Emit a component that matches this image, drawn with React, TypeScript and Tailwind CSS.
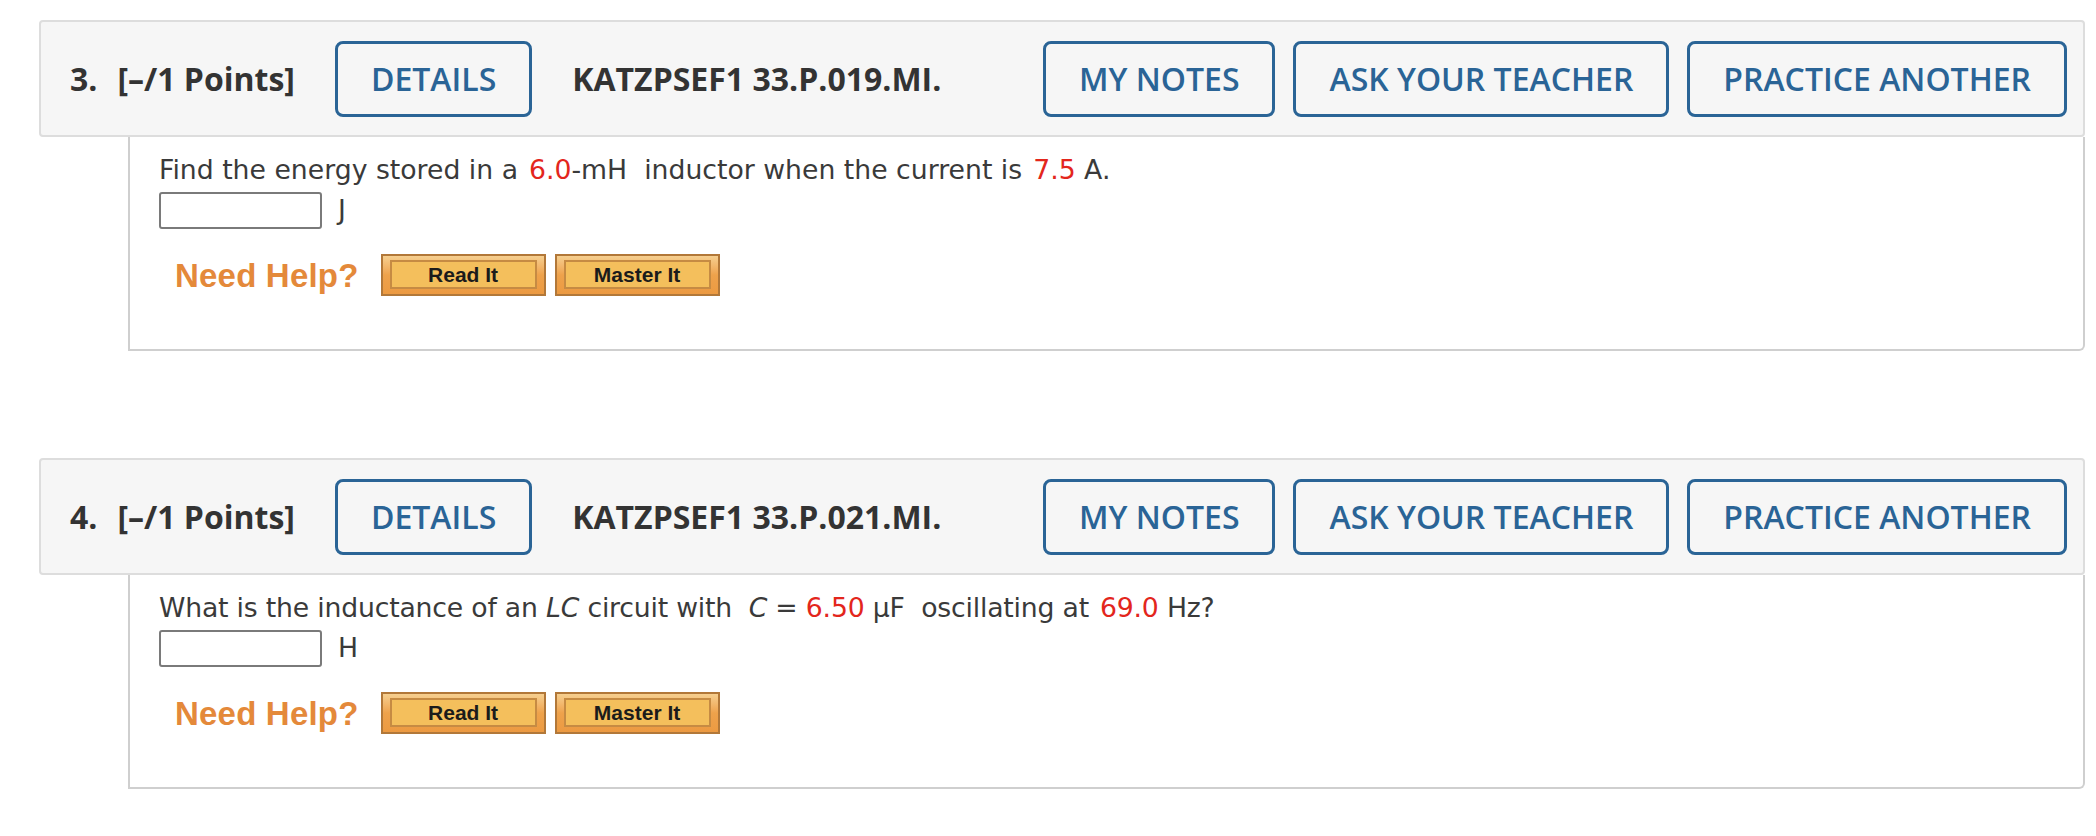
import type { ReactNode } from 'react'

const red = 'text-[#e3261c]'

function Val({ children }: { children: ReactNode }) {
  return <span className={`ml-[11px] ${red}`}>{children}</span>
}

function OutlineButton({ label }: { label: string }) {
  return (
    <button
      type="button"
      className="flex h-[76px] items-center rounded-[8px] border-[3px] border-[#2a6496] px-[33px] text-[32px] font-semibold leading-none text-[#2a6496]"
    >
      {label}
    </button>
  )
}

function HelpButton({ label }: { label: string }) {
  return (
    <div className="flex h-[42px] w-[165px] items-stretch border-2 border-[#b27839] bg-gradient-to-b from-[#f6cf8f] via-[#eea24b] to-[#ec9a42] px-[7px] pb-[5px] pt-[4px]">
      <div className="flex flex-1 items-center justify-center border-2 border-[#c68b43] bg-[#f4bf5c] font-['Liberation_Sans',Arial,sans-serif] text-[21px] font-bold leading-none text-[#1b1b1b]">
        {label}
      </div>
    </div>
  )
}

function Question({
  num,
  code,
  unit,
  tight,
  children,
}: {
  num: number
  code: string
  unit: string
  tight?: boolean
  children: ReactNode
}) {
  return (
    <div>
      {/* header bar */}
      <div className="flex h-[117px] items-center rounded-[4px] border-2 border-[#dddddd] bg-[#f6f6f6] pl-[29px] pr-[16px] font-['Open_Sans',sans-serif] text-[#333333]">
        <span className="text-[32px] font-bold">
          {num}.<span className="ml-[20px]">[–/1 Points]</span>
        </span>
        <div className="ml-[40px]">
          <OutlineButton label="DETAILS" />
        </div>
        <span className="ml-[40px] text-[32px] font-bold">{code}</span>
        <div className="ml-auto flex gap-[18px]">
          <OutlineButton label="MY NOTES" />
          <OutlineButton label="ASK YOUR TEACHER" />
          <OutlineButton label="PRACTICE ANOTHER" />
        </div>
      </div>

      {/* question body */}
      <div className="ml-[89px] rounded-br-[6px] border-2 border-t-0 border-[#cfcfcf] pb-[53px] pl-[29px] pt-[15px] font-['DejaVu_Sans',Verdana,sans-serif] text-[26.7px] text-[#3a3a3a]">
        <p className={`whitespace-pre leading-[36px] ${tight ? 'tracking-[-0.2px]' : ''}`}>{children}</p>
        <div className="mt-[3px] flex h-[38px] items-center gap-[16px]">
          <div className="h-[37px] w-[163px] rounded-[3px] border-2 border-[#7a7a7a] bg-white" />
          <span className="leading-none">{unit}</span>
        </div>
        <div className="mt-[25px] flex h-[42px] items-center pl-[16px]">
          <span className="mr-[22px] font-['Liberation_Sans',Arial,sans-serif] text-[33px] font-bold leading-none tracking-[0.2px] text-[#e4893a]">
            Need Help?
          </span>
          <div className="flex gap-[9px]">
            <HelpButton label="Read It" />
            <HelpButton label="Master It" />
          </div>
        </div>
      </div>
    </div>
  )
}

export default function App() {
  return (
    <div className="min-h-[836px] bg-white pl-[39px] pr-[11px] pt-[20px]">
      <Question num={3} code="KATZPSEF1 33.P.019.MI." unit="J">
        Find the energy stored in a<Val>6.0</Val>-mH{'\u00a0 '}inductor when the current is<Val>7.5</Val> A.
      </Question>
      <div className="mt-[107px]">
        <Question num={4} code="KATZPSEF1 33.P.021.MI." unit="H" tight>
          What is the inductance of an <i>LC</i> circuit with{'\u00a0 '}<i>C</i> = <span className={red}>6.50</span> μF{'\u00a0 '}oscillating at<Val>69.0</Val> Hz?
        </Question>
      </div>
    </div>
  )
}
